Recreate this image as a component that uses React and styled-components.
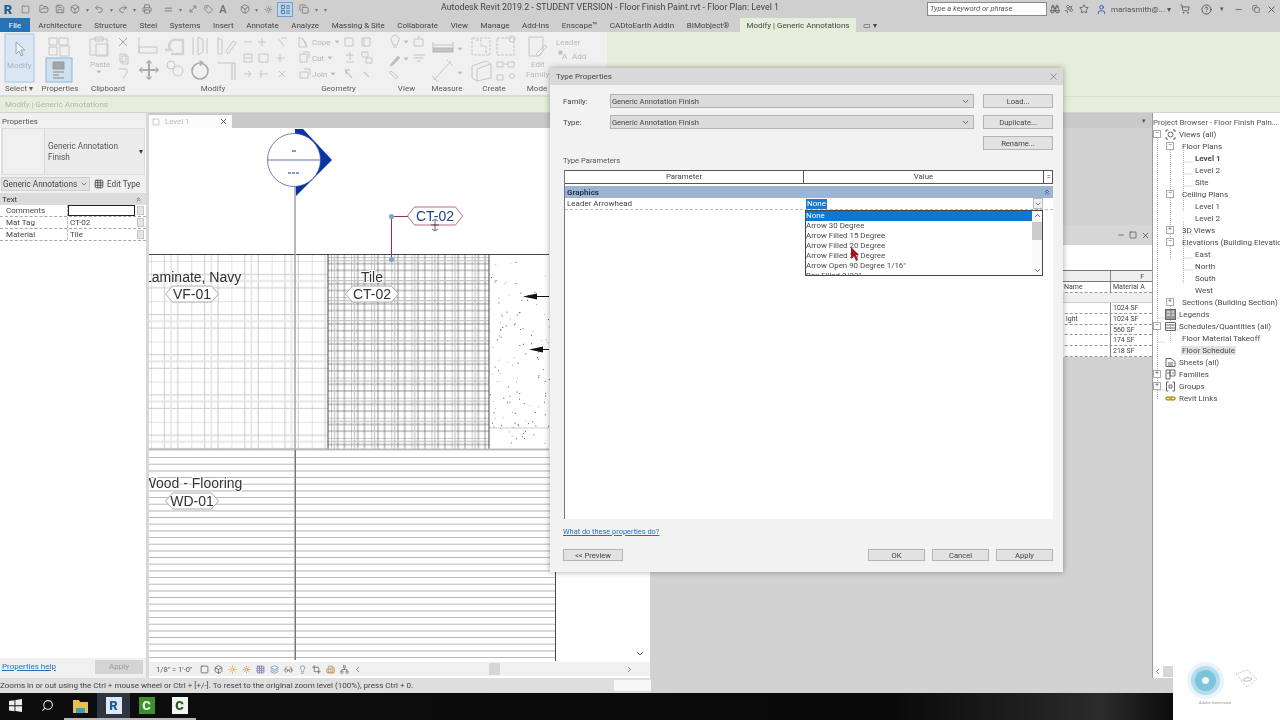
import React from "react";
import styled, { createGlobalStyle } from "styled-components";
import {
  Binoculars, Box, Building2, ChevronDown, ChevronLeft, ChevronRight, ChevronUp, ChevronsUp, CircleHelp, Copy, Crop,
  Equal, FolderOpen, Glasses, Grid3x3, Layers, LayoutList, Lightbulb, Minus, MoveDiagonal, Network, Printer, Redo2,
  Satellite, Save, Search, ShoppingCart, Square, Star, Sun, SunMedium, Tag, Undo2, User, X,
} from "lucide-react";

const UI = `"Roboto", "Noto Sans", sans-serif`;

const Global = createGlobalStyle`
  html, body { margin: 0; padding: 0; background: #fff; }
  * { box-sizing: border-box; }
`;

const Root = styled.div`
  width: 1280px;
  height: 720px;
  position: relative;
  overflow: hidden;
  display: flex;
  flex-direction: column;
  font-family: ${UI};
  font-size: 8px;
  color: #3c3c3c;
  background: #fff;
  filter: blur(0.3px);
`;

/* title bar */
const TitleBar = styled.div`
  height: 18px;
  background: #cfcfcf;
  position: relative;
  display: flex;
  align-items: center;
`;
const Qat = styled.div`
  display: flex;
  align-items: center;
  color: #777;
`;
const QatSlot = styled.span`
  width: ${(p) => p.$w}px;
  height: 15px;
  display: flex;
  align-items: center;
  justify-content: center;
  font-size: ${(p) => (p.$big ? 11 : 6)}px;
  font-weight: ${(p) => (p.$big ? 700 : 400)};
  background: ${(p) => (p.$on ? "#bcd7ee" : "transparent")};
  border: ${(p) => (p.$on ? "1px solid #6aa3d5" : "none")};
`;
const RevitMark = styled.span`
  width: 16px;
  text-align: center;
  font-size: 13px;
  font-weight: 900;
  color: #1f5f98;
`;
const TitleText = styled.div`
  position: absolute;
  left: 441px;
  top: 2px;
  font-size: 8.85px;
  color: #444;
  white-space: nowrap;
`;
const TitleRight = styled.div`
  margin-left: auto;
  display: flex;
  align-items: center;
  color: #555;
`;
const SearchBox = styled.div`
  width: 120px;
  height: 14px;
  background: #fff;
  border: 1px solid #888;
  font-size: 7.5px;
  font-style: italic;
  color: #555;
  padding: 1px 2px;
  margin-right: 1px;
`;
const UserName = styled.span`
  width: 66px;
  font-size: 8px;
  padding-left: 1px;
  white-space: nowrap;
`;
const UserGlyph = styled.span`
  width: ${(p) => p.$w || 14}px;
  display: flex;
  justify-content: center;
  color: ${(p) => p.$c || "#555"};
  font-size: 7px;
`;

/* tabs */
const TabRow = styled.div`
  height: 14px;
  background: #cfcfcf;
  display: flex;
  align-items: stretch;
`;
const FileTab = styled.div`
  width: 30px;
  background: #2574b5;
  color: #fff;
  font-size: 8px;
  display: flex;
  align-items: center;
  justify-content: center;
  margin-right: 2px;
`;
const Tab = styled.div`
  padding: 0 ${(p) => (p.$active ? 7 : 6.3)}px;
  margin-left: ${(p) => (p.$active ? 4 : 0)}px;
  display: flex;
  align-items: center;
  white-space: nowrap;
  font-size: 8px;
  color: #444;
  background: ${(p) => (p.$active ? "#e5eeda" : "transparent")};
`;

/* ribbon */
const Ribbon = styled.div`
  height: 64px;
  display: flex;
  background: #e5eeda;
`;
const RibbonGroup = styled.div`
  width: ${(p) => p.$w}px;
  display: flex;
  flex-direction: column;
  background: #f0f0f0;
  border-bottom: 1px solid #dadada;
`;
const GroupLabel = styled.div`
  height: 11px;
  line-height: 10px;
  text-align: center;
  font-size: 8px;
  color: #5c5c5c;
  white-space: nowrap;
`;
const RibbonArt = styled.svg`
  display: block;
  fill: none;
  stroke: #c6c6c6;
  stroke-width: 1;
  text {
    stroke: none;
    fill: #b8b8b8;
    font-family: ${UI};
    font-size: 8px;
  }
`;
const ContextBar = styled.div`
  height: 17px;
  background: #e5eeda;
  border-top: 1px solid #d6dfcb;
  border-bottom: 1px solid #d4d4d4;
  font-size: 8px;
  color: #b4b4b4;
  padding: 3px 0 0 5px;
`;

/* main area */
const Main = styled.div`
  flex: 1;
  display: flex;
  min-height: 0;
`;
const PropsPanel = styled.div`
  width: 146px;
  display: flex;
  flex-direction: column;
  background: #fff;
`;
const Splitter = styled.div`
  width: 3px;
  background: #d8d8d8;
`;
const PanelHead = styled.div`
  height: 15px;
  background: #f0f0f0;
  font-size: 7.8px;
  color: #555;
  padding: 4px 0 0 2px;
`;
const TypeBox = styled.div`
  height: 47px;
  background: #ececec;
  border: 1px solid #dcdcdc;
  margin: 0 1px;
  display: flex;
  align-items: center;
  position: relative;
`;
const Thumb = styled.div`
  width: 43px;
  height: 45px;
  background: #f0f0f0;
  border-right: 1px solid #d8d8d8;
  border-left: 1px solid #e0e0e0;
`;
const TypeName = styled.div`
  width: 91px;
  margin-left: 3px;
  font-size: 8.2px;
  line-height: 11px;
  color: #555;
`;
const SelectorRow = styled.div`
  height: 18px;
  background: #f0f0f0;
  display: flex;
  align-items: center;
  padding: 1px 1px;
`;
const CatSelect = styled.div`
  width: 89px;
  height: 14px;
  background: #e2e2e2;
  border: 1px solid #cfcfcf;
  font-size: 8.2px;
  color: #444;
  display: flex;
  align-items: center;
  justify-content: space-between;
  padding: 0 1px;
  white-space: nowrap;
`;
const EditType = styled.div`
  flex: 1;
  display: flex;
  align-items: center;
  gap: 3px;
  padding-left: 4px;
  font-size: 8.2px;
  color: #444;
`;
const GroupHead = styled.div`
  height: 12px;
  background: #dcdcdc;
  display: flex;
  align-items: center;
  justify-content: space-between;
  padding: 0 4px 0 2px;
  font-size: 8px;
  color: #333;
`;
const PropRow = styled.div`
  height: 12px;
  display: grid;
  grid-template-columns: 68px 67px 11px;
  border-bottom: 1px dashed #a8a8a8;
  font-size: 8px;
  color: #444;
`;
const PropName = styled.div`
  padding-left: 6px;
  border-right: 1px dashed #bbb;
  line-height: 11px;
`;
const PropValue = styled.div`
  padding-left: 2px;
  line-height: 11px;
  border: ${(p) => (p.$focus ? "1px solid #222" : "none")};
`;
const PropGrip = styled.div`
  margin: 1px 2px;
  background: #e4e4e4;
  border: 1px solid #c8c8c8;
`;
const PanelFiller = styled.div`
  flex: 1;
`;
const PanelFoot = styled.div`
  height: 20px;
  background: #f0f0f0;
  display: flex;
  align-items: center;
  justify-content: space-between;
  padding: 0 3px 3px 2px;
`;
const HelpLink = styled.span`
  color: #2a6fb5;
  text-decoration: underline;
  font-size: 8px;
`;
const ApplyGhost = styled.div`
  width: 48px;
  height: 14px;
  background: #d4d4d4;
  color: #9a9a9a;
  font-size: 8px;
  text-align: center;
  line-height: 14px;
`;

/* view */
const ViewPane = styled.div`
  width: 501px;
  display: flex;
  flex-direction: column;
  background: #fff;
`;
const ViewTabs = styled.div`
  height: 15px;
  padding-top: 2px;
  background: #c9c9c9;
  display: flex;
`;
const ViewTab = styled.div`
  width: 83px;
  background: #fbfbfb;
  display: flex;
  align-items: center;
  padding: 0 4px 0 3px;
  font-size: 7.8px;
  color: #bbb;
  gap: 5px;
`;
const TabClose = styled.span`
  margin-left: auto;
  color: #333;
  display: flex;
`;
const PlanSvg = styled.svg`
  display: block;
  text {
    font-family: "Liberation Sans", Arial, sans-serif;
  }
`;
const ViewBar = styled.div`
  height: 14px;
  background: #f0f0f0;
  display: flex;
  align-items: center;
  color: #666;
  padding-left: 7px;
  position: relative;
`;
const Scale = styled.span`
  width: 44px;
  font-size: 7.6px;
  color: #555;
  white-space: nowrap;
`;
const BarIcons = styled.div`
  display: flex;
  gap: 5px;
  align-items: center;
  margin-right: 4px;
`;
const ScrollThumb = styled.div`
  width: 11px;
  height: 12px;
  margin-left: 127px;
  background: #d6d6d6;
`;
const ScrollEnd = styled.span`
  margin-left: auto;
  margin-right: 16px;
  display: flex;
`;

/* grey workspace with the schedule window */
const Workspace = styled.div`
  flex: 1;
  min-width: 0;
  position: relative;
  background: #d2d2d2;
  border-right: 1px solid #9c9c9c;
`;
const WorkStrip = styled.div`
  height: 15px;
  background: #c9c9c9;
  display: flex;
  justify-content: flex-end;
  align-items: center;
  padding-right: 6px;
  color: #555;
  font-size: 7px;
`;
const ScheduleWin = styled.div`
  position: absolute;
  left: 390px;
  top: 112px;
  width: 112px;
  display: flex;
  flex-direction: column;
`;
const SchedTitle = styled.div`
  height: 20px;
  background: #d6d6d6;
  display: flex;
  justify-content: flex-end;
  align-items: center;
  gap: 4px;
  padding-right: 2px;
  color: #444;
`;
const SchedBody = styled.div`
  background: #fff;
  padding-top: 25px;
`;
const SchedRow = styled.div`
  height: ${(p) => p.$h || 10.8}px;
  display: grid;
  grid-template-columns: 70px 42px;
  font-size: 7px;
  line-height: ${(p) => p.$h || 10.8}px;
  color: #444;
  background: ${(p) => p.$bg || "#fff"};
  border-bottom: 1px ${(p) => p.$line || "dashed #999"};
  border-top: ${(p) => (p.$top ? "1px solid #777" : "none")};
`;
const SchedCell = styled.div`
  padding-left: ${(p) => p.$indent || 2}px;
  text-align: ${(p) => p.$align || "left"};
  padding-right: ${(p) => (p.$align === "right" ? 8 : 0)}px;
  border-left: ${(p) => (p.$rule ? "1px solid #888" : "none")};
  overflow: hidden;
  white-space: nowrap;
`;

/* project browser */
const BrowserPane = styled.div`
  flex: 0 0 127px;
  min-width: 0;
  overflow: hidden;
  background: #fff;
  position: relative;
  display: flex;
  flex-direction: column;
`;
const BrowserHead = styled.div`
  font-size: 7.8px;
  color: #555;
  height: 15px;
  padding: 5px 0 0 0;
  white-space: nowrap;
  overflow: hidden;
`;
const TreeLines = styled.svg`
  position: absolute;
  left: 0;
  top: 0;
  fill: none;
  stroke: #b5b5b5;
  stroke-dasharray: 1 1;
`;
const TreeRow = styled.div`
  height: 12px;
  flex: none;
  position: relative;
  display: flex;
  align-items: center;
  padding-left: ${(p) => p.$pad}px;
  font-size: 8px;
  white-space: nowrap;
  color: #4a4a4a;
  font-weight: ${(p) => (p.$bold ? 700 : 400)};
`;
const TreeBox = styled.span`
  width: 8px;
  height: 8px;
  margin-right: ${(p) => p.$gap}px;
  background: #fff;
  border: 1px solid #aaa;
  color: #555;
  font-size: 7px;
  line-height: 5px;
  text-align: center;
  flex: none;
`;
const TreeIcon = styled.svg`
  width: 11px;
  height: 11px;
  margin-right: 3px;
  fill: none;
  stroke: #666;
  flex: none;
`;
const TreeText = styled.span`
  background: ${(p) => (p.$on ? "#e2e2e2" : "transparent")};
  padding: 0 ${(p) => (p.$on ? "1px" : "0")};
`;
const BrowserBottom = styled.div`
  margin-top: auto;
  height: 14px;
  display: flex;
  align-items: center;
  color: #555;
`;
const BrowserThumb = styled.span`
  width: 10px;
  height: 11px;
  background: #d6d6d6;
  margin-left: 1px;
`;

/* status + taskbar */
const StatusBar = styled.div`
  height: 15px;
  background: #dedede;
  display: flex;
  align-items: center;
  font-size: 8.05px;
  color: #444;
  position: relative;
`;
const StatusText = styled.span`
  width: 614px;
  white-space: nowrap;
`;
const StatusField = styled.div`
  width: 37px;
  height: 11px;
  background: #f7f7f7;
`;
const StatusGrey = styled.div`
  flex: 1;
  height: 100%;
  background: #d2d2d2;
`;
const Taskbar = styled.div`
  height: 27px;
  background: linear-gradient(90deg, #0d0d0d 0%, #0a0a0a 70%, #2b2b2b 86%, #0a0a0a 92%);
  display: flex;
  align-items: center;
`;
const TaskItem = styled.div`
  width: ${(p) => p.$w || 33}px;
  height: 27px;
  display: flex;
  align-items: center;
  justify-content: center;
  color: #ddd;
  background: ${(p) => (p.$active ? "#2c3542" : "transparent")};
  border-bottom: 2px solid ${(p) => (p.$open ? "#b8b8b8" : "transparent")};
`;
const AppTile = styled.div`
  width: 16px;
  height: 17px;
  background: ${(p) => p.$bg};
  color: ${(p) => p.$fg};
  font-size: 13px;
  font-weight: 900;
  line-height: 17px;
  text-align: center;
`;

/* floating things */
const Watermark = styled.div`
  position: absolute;
  left: 1173px;
  top: 663px;
  width: 107px;
  height: 57px;
  background: #fff;
`;
const WaterRing = styled.div`
  position: absolute;
  left: 14px;
  top: -1px;
  width: 37px;
  height: 37px;
  border-radius: 50%;
  background: radial-gradient(circle, #f4f4f4 0 3px, #7cc3dc 4px 10px, #b4dcea 11px 14px, #e8f3fa 15px);
`;
const WaterLogo = styled.svg`
  position: absolute;
  left: 62px;
  top: 6px;
  fill: none;
  stroke: #8a8a8a;
  stroke-width: 0.6;
`;
const WaterCaption = styled.div`
  position: absolute;
  left: 26px;
  top: 37px;
  font-size: 4px;
  color: #999;
  white-space: nowrap;
`;

/* type properties dialog */
const Dialog = styled.div`
  position: absolute;
  left: 550px;
  top: 68px;
  width: 513px;
  height: 504px;
  background: #f2f2f2;
  box-shadow: 0 0 6px rgba(0, 0, 0, 0.35);
  display: flex;
  flex-direction: column;
`;
const DialogHead = styled.div`
  height: 17px;
  background: #d9d9d9;
  display: flex;
  align-items: center;
  justify-content: space-between;
  padding: 0 4px 0 6px;
  font-size: 8px;
  color: #444;
`;
const DialogBody = styled.div`
  flex: 1;
  padding: 9px 10px 11px 13px;
  display: flex;
  flex-direction: column;
`;
const FormRow = styled.div`
  height: 14px;
  display: flex;
  align-items: center;
  margin-bottom: 7px;
  justify-content: ${(p) => (p.$end ? "flex-end" : "flex-start")};
`;
const FormLabel = styled.span`
  width: 47px;
  font-size: 7.8px;
  color: #444;
`;
const Combo = styled.div`
  width: 365px;
  height: 14px;
  margin-right: 9px;
  background: #dbdbdb;
  border: 1px solid #b2b2b2;
  display: flex;
  align-items: center;
  justify-content: space-between;
  padding: 0 3px 0 1px;
  font-size: 7.6px;
  color: #444;
`;
const DlgButton = styled.div`
  width: ${(p) => p.$w || 70}px;
  height: ${(p) => p.$h || 14}px;
  background: #e2e2e2;
  border: 1px solid #b4b4b4;
  font-size: 7.6px;
  color: #444;
  display: flex;
  align-items: center;
  justify-content: center;
`;
const SectionTitle = styled.div`
  height: 12px;
  margin-top: -4px;
  margin-bottom: 5px;
  padding-top: 3px;
  font-size: 7.6px;
  color: #555;
`;
const ParamTable = styled.div`
  height: 349px;
  width: 489px;
  margin-left: 1px;
  background: #fff;
  border-left: 1px solid #777;
  position: relative;
  display: flex;
  flex-direction: column;
`;
const ParamHead = styled.div`
  height: 14px;
  display: grid;
  grid-template-columns: 239px 240px 10px;
  border: 1px solid #555;
  border-left: none;
  background: #fff;
  font-size: 7.8px;
  color: #444;
  text-align: center;
  line-height: 12px;
`;
const HeadCell = styled.div`
  border-right: ${(p) => (p.$last ? "none" : "1px solid #555")};
`;
const ParamGroup = styled.div`
  height: 12px;
  margin-top: 2px;
  background: #9db4d3;
  display: flex;
  align-items: center;
  justify-content: space-between;
  padding: 0 2px;
  font-size: 8px;
  font-weight: 700;
  color: #23364f;
`;
const ParamRow = styled.div`
  height: 12px;
  display: grid;
  grid-template-columns: 240px 238px 11px;
  font-size: 8px;
  line-height: 11px;
  color: #444;
  border-bottom: 1px dashed #bbb;
`;
const ParamName = styled.div`
  padding-left: 2px;
`;
const ParamValue = styled.div`
  padding-left: 1px;
  display: flex;
  justify-content: space-between;
  align-items: center;
`;
const Selected = styled.span`
  background: #1a78d0;
  color: #fff;
  padding: 0 1px;
  line-height: 10px;
`;
const DropArrow = styled.span`
  width: 10px;
  height: 11px;
  background: #eee;
  border: 1px solid #bbb;
  display: flex;
  align-items: center;
  justify-content: center;
  color: #555;
`;
const DropList = styled.div`
  position: absolute;
  left: 240px;
  top: 40px;
  width: 238px;
  height: 66px;
  background: #fff;
  border: 1px solid #444;
  display: flex;
  overflow: hidden;
`;
const DropItems = styled.div`
  flex: 1;
  min-width: 0;
`;
const DropItem = styled.div`
  height: 10px;
  line-height: 10px;
  font-size: 7.9px;
  white-space: nowrap;
  color: ${(p) => (p.$on ? "#fff" : "#4a4a4a")};
  background: ${(p) => (p.$on ? "#0c78d4" : "transparent")};
`;
const DropScroll = styled.div`
  width: 10px;
  display: flex;
  flex-direction: column;
  align-items: center;
  justify-content: space-between;
  color: #444;
  position: relative;
  background: #fafafa;
`;
const DropThumb = styled.div`
  position: absolute;
  top: 11px;
  left: 0;
  width: 10px;
  height: 18px;
  background: #cdcdcd;
`;
const LinkRow = styled.div`
  margin-top: 8px;
  height: 10px;
  font-size: 7.4px;
  color: #2a6fb5;
  text-decoration: underline;
`;
const DialogFoot = styled.div`
  margin-top: auto;
  display: flex;
  align-items: center;
  gap: 7px;
`;
const FootGap = styled.div`
  flex: 1;
`;
const RedCursor = styled.svg`
  position: absolute;
  left: 851px;
  top: 247px;
`;

const QAT_ITEMS = [
  { w: 19, icon: <Square size={9} /> },
  { w: 17, icon: <FolderOpen size={10} /> },
  { w: 16, icon: <Save size={10} /> },
  { w: 14, icon: <Box size={10} /> },
  { w: 11, icon: "▾" },
  { w: 12, icon: <Undo2 size={10} /> },
  { w: 12, icon: "▾" },
  { w: 11, icon: <Redo2 size={10} /> },
  { w: 12, icon: "▾" },
  { w: 14, icon: <Printer size={10} /> },
  { w: 6 },
  { w: 16, icon: <Equal size={11} /> },
  { w: 8, icon: "▾" },
  { w: 18, icon: <MoveDiagonal size={10} /> },
  { w: 12, icon: <Tag size={9} /> },
  { w: 18, icon: "A", big: true },
  { w: 5 },
  { w: 16, icon: <Box size={10} /> },
  { w: 6, icon: "▾" },
  { w: 18, icon: <SunMedium size={9} /> },
  { w: 16, icon: <LayoutList size={11} color="#3d6f9e" />, on: true },
  { w: 22, icon: <Copy size={10} /> },
  { w: 2, icon: "▾" },
  { w: 16, icon: "▾" },
];

const TABS = [
  "Architecture", "Structure", "Steel", "Systems", "Insert", "Annotate", "Analyze", "Massing & Site",
  "Collaborate", "View", "Manage", "Add-Ins", "Enscape™", "CADtoEarth AddIn", "BIMobject®",
];

const Art = ({ x, w, children }) => (
  <RibbonArt width={w} height={52} viewBox={`${x} 32 ${w} 52`}>
    {children}
  </RibbonArt>
);

const Ribbons = () => (
  <Ribbon>
    <RibbonGroup $w={38}>
      <Art x={0} w={38}>
        <rect x="5" y="34" width="29" height="48" fill="#d9e6f3" stroke="#a9c5e2" />
        <path d="M16 42v12l3-3 2 5 2-1-2-5h4z" fill="#eef3f8" stroke="#9aa8b5" />
        <text x="7" y="68" style={{ fill: "#a6b4c2" }}>Modify</text>
      </Art>
      <GroupLabel>Select ▾</GroupLabel>
    </RibbonGroup>
    <RibbonGroup $w={44}>
      <Art x={38} w={44}>
        <path d="M49 38h8v7h-8zM59 38h9v7h-9zM49 47h8v8h-8zM60 46h9v10h-9z" />
        <rect x="46" y="58" width="26" height="24" fill="#cfe0f0" stroke="#8db5da" />
        <path d="M53 62h11v7h-11z" fill="#a4a4a4" stroke="#999" />
        <path d="M53 72h11M53 75h6m-6 3h11" stroke="#8a8a8a" />
      </Art>
      <GroupLabel>Properties</GroupLabel>
    </RibbonGroup>
    <RibbonGroup $w={52}>
      <Art x={82} w={52}>
        <path d="M90 39h17v16h-17z" />
        <path d="M95 37h8v4h-8zM96 44h12v12h-12z" />
        <text x="90" y="67">Paste</text>
        <path d="M97 71h4l-2 2z" fill="#aaa" />
        <path d="M119 38l8 8m0-8l-8 8" stroke="#a5a5a5" />
        <path d="M120 54h6v8h-6zM122 56h6v8h-6z" />
        <path d="M119 69h8v4l-4 5" />
      </Art>
      <GroupLabel>Clipboard</GroupLabel>
    </RibbonGroup>
    <RibbonGroup $w={158}>
      <Art x={134} w={158}>
        <path d="M139 37v16m0-6h18v6h-18z" />
        <path d="M149 62v16m-8-8h16" strokeWidth="2" stroke="#a8a8a8" />
        <path d="M149 60l-3 3h6zM149 80l-3-3h6zM139 70l3-3v6zM159 70l-3-3v6z" fill="#a8a8a8" />
        <path d="M165 50h6a6 6 0 0 1 6-10h6v14h-12" strokeWidth="2.4" stroke="#d2d2d2" />
        <circle cx="171" cy="65" r="4" />
        <circle cx="178" cy="71" r="5" />
        <path d="M193 37v18m5 0v-18l5 3v12zM207 38v16" />
        <circle cx="200" cy="71" r="8" strokeWidth="1.6" stroke="#a9a9a9" />
        <path d="M200 60l4 3-4 3z" fill="#a9a9a9" />
        <path d="M218 38v16h4v-14zM228 54l8-11-3-2-7 10z" />
        <path d="M218 63h17M232 63v17m3-17v17" strokeWidth="1.2" />
        <path d="M244 42h8M258 42h8M262 38v8M278 38l6 8m-3-8h6" />
        <path d="M244 54h8v8h-8zM244 58h8M259 54h9v8h-9zM280 54v8m-3-4h8" />
        <path d="M244 74h6m-2-3l3 3-3 3M261 70v8m-2-4h9M279 71l6 6m0-6l-6 6" />
      </Art>
      <GroupLabel>Modify</GroupLabel>
    </RibbonGroup>
    <RibbonGroup $w={93}>
      <Art x={292} w={93}>
        <path d="M299 37v10h8l-2-6zM302 38l5 9" />
        <text x="312" y="45">Cope</text>
        <path d="M335 41h4l-2 2z" fill="#aaa" />
        <path d="M300 54h7v8h-7zM303 52h6v6" />
        <text x="312" y="61">Cut</text>
        <path d="M328 57h4l-2 2z" fill="#aaa" />
        <path d="M300 72h8v6h-8zM304 69h6v6" />
        <text x="312" y="77">Join</text>
        <path d="M331 73h4l-2 2z" fill="#aaa" />
        <path d="M345 38h8v8h-8zM362 38h8v8h-8zM364 38v8" />
        <path d="M346 55h8M350 52v8M346 62h8M362 52h6v5h-6zM366 58h6v5h-6z" />
        <path d="M345 70l7 8M350 70h-4v4M364 72l5 5" strokeWidth="1.4" />
      </Art>
      <GroupLabel>Geometry</GroupLabel>
    </RibbonGroup>
    <RibbonGroup $w={43}>
      <Art x={385} w={43}>
        <path d="M392 42a4 4 0 1 1 6 0l-1 3h-4zM393 47h4" />
        <path d="M404 41h4l-2 2zM404 58h4l-2 2z" fill="#aaa" />
        <path d="M414 39h9v7h-9zM417 37h3" />
        <path d="M391 64l7-8 2 2-7 7-3 1z" fill="#c0c0c0" />
        <path d="M413 55h12M413 58h10m-6 3h4" />
        <path d="M391 71l7 6-2 2-6-6z" />
      </Art>
      <GroupLabel>View</GroupLabel>
    </RibbonGroup>
    <RibbonGroup $w={38}>
      <Art x={428} w={38}>
        <path d="M433 45h20m-20-3v6m20-6v6" />
        <rect x="433" y="48" width="20" height="4" fill="#c4c4c4" stroke="#b5b5b5" />
        <path d="M458 48h4l-2 2z" fill="#aaa" />
        <path d="M434 80l17-19m-19 15l6 6m9-22l6 6" />
        <path d="M458 72h4l-2 2z" fill="#aaa" />
      </Art>
      <GroupLabel>Measure</GroupLabel>
    </RibbonGroup>
    <RibbonGroup $w={56}>
      <Art x={466} w={56}>
        <path d="M472 38h18v17h-18zM476 40h5v6h5v7" strokeDasharray="3 1" />
        <path d="M497 38h17v17h-17z" strokeDasharray="3 1" />
        <circle cx="512" cy="39" r="3" />
        <path d="M472 66l14-5 5 3v14l-14 3-5-3zM477 69l14-5M477 69v12" />
        <path d="M497 62h6v5h-6zM508 62h6v5h-6zM503 64h5M497 75h6v5h-6zM512 73l3 3-3 3-3-3z" />
      </Art>
      <GroupLabel>Create</GroupLabel>
    </RibbonGroup>
    <RibbonGroup $w={30}>
      <Art x={522} w={30}>
        <path d="M529 37h14v14l-4 5h-10zM536 54l9-9 2 2-9 9z" />
        <text x="531" y="67">Edit</text>
        <text x="526" y="77">Family</text>
      </Art>
      <GroupLabel>Mode</GroupLabel>
    </RibbonGroup>
    <RibbonGroup $w={55}>
      <Art x={552} w={55}>
        <text x="556" y="45">Leader</text>
        <path d="M559 51h3v3h-3z" fill="#bbb" />
        <text x="562" y="59">A</text>
        <text x="572" y="59">Add</text>
      </Art>
      <GroupLabel />
    </RibbonGroup>
  </Ribbon>
);

const rand = (n) => {
  const v = Math.sin(n * 12.9898) * 43758.5453;
  return v - Math.floor(v);
};
const STIPPLE = Array.from({ length: 120 }, (_, i) => [490 + rand(i + 1) * 59, 257 + rand(i + 301) * 190]);

const HexTag = ({ cx, cy, w, text, color = "#8a8a8a", fill = "#333", h = 8 }) => {
  const l = cx - w / 2;
  const r = cx + w / 2;
  return (
    <g>
      <polygon
        points={`${l},${cy} ${l + 7},${cy - h} ${r - 7},${cy - h} ${r},${cy} ${r - 7},${cy + h} ${l + 7},${cy + h}`}
        fill="#fff"
        stroke={color}
        strokeWidth="0.7"
      />
      <text x={cx} y={cy + 5} fontSize="14" textAnchor="middle" fill={fill}>{text}</text>
    </g>
  );
};

const FloorPlan = () => (
  <PlanSvg width="501" height="534" viewBox="149 128 501 534">
    <defs>
      <pattern id="lam" x="151" y="261" width="40.2" height="40.2" patternUnits="userSpaceOnUse">
        <path d="M0 0v40.2M13.4 0v40.2M26.8 0v40.2M0 0h40.2M0 13.4h40.2M0 26.8h40.2" stroke="#bdbdbd" strokeWidth="0.8" fill="none" />
        <path d="M20 0v40.2M0 20h40.2" stroke="#e4e4e4" strokeWidth="1.6" fill="none" />
      </pattern>
      <pattern id="tile" x="331" y="257" width="20.1" height="20.1" patternUnits="userSpaceOnUse">
        <path d="M0 0v20.1M6.7 0v20.1M13.4 0v20.1M0 0h20.1M0 6.7h20.1M0 13.4h20.1" stroke="#5f5f5f" strokeWidth="0.65" fill="none" />
        <path d="M3.4 0v20.1M0 3.4h20.1" stroke="#c4c4c4" strokeWidth="1.2" fill="none" />
      </pattern>
      <pattern id="wood" x="149" y="457" width="10" height="20" patternUnits="userSpaceOnUse">
        <path d="M0 0.5h10M0 7.2h10" stroke="#9c9c9c" strokeWidth="0.7" fill="none" />
        <path d="M0 13.9h10" stroke="#cfcfcf" strokeWidth="1.6" fill="none" />
      </pattern>
    </defs>
    <rect x="149" y="254" width="179" height="195" fill="url(#lam)" />
    <rect x="328" y="254" width="161" height="195" fill="url(#tile)" />
    {STIPPLE.map(([x, y], i) => (
      <rect key={i} x={x} y={y} width="1" height="1" fill={i % 3 ? "#555" : "#aaa"} />
    ))}
    <path d="M489 428h60" stroke="#cfcfcf" />
    <path d="M149 254.5h400M328 254v195M489 254v195" stroke="#333" strokeWidth="0.9" fill="none" />
    <path d="M149 449.5h400" stroke="#bbb" strokeWidth="2" />
    <rect x="149" y="454" width="406" height="206" fill="url(#wood)" />
    <path d="M555.5 450v211" stroke="#333" strokeWidth="0.9" />
    <path d="M295 187v473" stroke="#a8a8a8" strokeWidth="1.6" />
    <path d="M295.5 450v210" stroke="#777" strokeWidth="1" />

    <polygon points="295,129 303,129 332,160 296,196" fill="#0b33a8" />
    <circle cx="294" cy="160" r="26.5" fill="#fff" stroke="#3a4b85" strokeWidth="0.7" />
    <path d="M268 160h53" stroke="#3a4b85" strokeWidth="0.8" />
    <path d="M292 151h4M288 173h3m1 0h3m1 0h3" stroke="#1a2f86" strokeWidth="1.2" />

    <path d="M408 216.5h-16.5v43" stroke="#98304c" strokeWidth="1" fill="none" />
    <circle cx="391.5" cy="216.5" r="2.6" fill="#86a2c7" />
    <circle cx="391.5" cy="259.5" r="2.6" fill="#86a2c7" />
    <HexTag cx={435} cy={216} w={55} h={9} text="CT-02" color="#98304c" fill="#24408f" />
    <path d="M435 220v10M431 225h8M432 221l3-2 3 2M432 229l3 2 3-2" stroke="#223" strokeWidth="0.7" fill="none" />

    <text x="144" y="282" fontSize="14" fill="#333">Laminate, Navy</text>
    <HexTag cx={192} cy={294} w={53} text="VF-01" />
    <text x="372" y="282" fontSize="14" fill="#333" textAnchor="middle" stroke="#fff" strokeWidth="2" paintOrder="stroke">Tile</text>
    <HexTag cx={372} cy={294} w={53} text="CT-02" />
    <path d="M549 296.5h-16" stroke="#111" />
    <polygon points="523,296.5 537,293.5 537,299.5" fill="#111" />
    <path d="M549 349.5h-16" stroke="#111" />
    <polygon points="529,349.5 543,346.5 543,352.5" fill="#111" />

    <text x="143" y="488" fontSize="14" fill="#333" stroke="#fff" strokeWidth="2" paintOrder="stroke">Wood - Flooring</text>
    <HexTag cx={192} cy={501} w={53} text="WD-01" />
    <path d="M640 655l-3-3m3 3l3-3" stroke="#555" fill="none" />
  </PlanSvg>
);

const ICONS = {
  views: <g><path d="M1 3V1h2M8 1h2v2M1 8v2h2M10 8v2H8" /><circle cx="5.5" cy="5.5" r="2.5" /></g>,
  legend: <g fill="#999"><rect x="0.5" y="0.5" width="10" height="10" /><path d="M2 3h3M2 6h3M7 3h2M7 6h2" stroke="#fff" /></g>,
  sched: <path d="M0.5 1.5h10v8h-10zM0.5 4h10M0.5 7h10" />,
  sheet: <path d="M1 1.5h5l4 3v5H1zM3 6h5M3 8h5" />,
  family: <path d="M1 1h4v9H1zM5 1h5v6H5zM2 4h2M7 4h2" />,
  group: <path d="M1.5 1v9M9.5 1v9M1.5 1h2M1.5 10h2M9.5 1h-2M9.5 10h-2M4 4h3v3H4z" />,
  links: <g stroke="#b8a01e" strokeWidth="1.6"><ellipse cx="3.5" cy="5.5" rx="2.5" ry="1.4" /><ellipse cx="7.5" cy="5.5" rx="2.5" ry="1.4" /></g>,
};

const TREE = [
  { t: "Views (all)", pad: 0, box: "−", icon: "views" },
  { t: "Floor Plans", pad: 13, box: "−" },
  { t: "Level 1", pad: 42, bold: true },
  { t: "Level 2", pad: 42 },
  { t: "Site", pad: 42 },
  { t: "Ceiling Plans", pad: 13, box: "−" },
  { t: "Level 1", pad: 42 },
  { t: "Level 2", pad: 42 },
  { t: "3D Views", pad: 13, box: "+" },
  { t: "Elevations (Building Elevation)", pad: 13, box: "−" },
  { t: "East", pad: 42 },
  { t: "North", pad: 42 },
  { t: "South", pad: 42 },
  { t: "West", pad: 42 },
  { t: "Sections (Building Section)", pad: 13, box: "+" },
  { t: "Legends", pad: 12, icon: "legend" },
  { t: "Schedules/Quantities (all)", pad: 0, box: "−", icon: "sched" },
  { t: "Floor Material Takeoff", pad: 29 },
  { t: "Floor Schedule", pad: 28, on: true },
  { t: "Sheets (all)", pad: 12, icon: "sheet" },
  { t: "Families", pad: 0, box: "+", icon: "family" },
  { t: "Groups", pad: 0, box: "+", icon: "group" },
  { t: "Revit Links", pad: 12, icon: "links" },
];

const Browser = () => (
  <BrowserPane>
    <TreeLines width="127" height="300">
      <path d="M4.5 25v262M17.5 37v110M30.5 37v62M30.5 49h10M30.5 61h10M30.5 73h10M30.5 109v62M30.5 121h10M30.5 133h10M30.5 145h10M30.5 157h10M17.5 193v36M17.5 205h10M17.5 217h10M4.5 205h8M4.5 229h8M4.5 277h8" />
    </TreeLines>
    <BrowserHead>Project Browser - Floor Finish Pain...</BrowserHead>
    {TREE.map((row, i) => (
      <TreeRow key={i} $pad={row.pad} $bold={row.bold}>
        {row.box && <TreeBox $gap={row.icon ? 4 : 8}>{row.box}</TreeBox>}
        {row.icon && <TreeIcon viewBox="0 0 11 11">{ICONS[row.icon]}</TreeIcon>}
        <TreeText $on={row.on}>{row.t}</TreeText>
      </TreeRow>
    ))}
    <BrowserBottom>
      <ChevronLeft size={9} />
      <BrowserThumb />
    </BrowserBottom>
  </BrowserPane>
);

const ARROWHEADS = [
  "Arrow 30 Degree", "Arrow Filled 15 Degree", "Arrow Filled 20 Degree", "Arrow Filled 30 Degree",
  "Arrow Open 90 Degree 1/16\"", "Box Filled 3/32\"",
];

const TypeDialog = () => (
  <Dialog>
    <DialogHead>
      Type Properties
      <X size={11} strokeWidth={1} />
    </DialogHead>
    <DialogBody>
      <FormRow>
        <FormLabel>Family:</FormLabel>
        <Combo>Generic Annotation Finish<ChevronDown size={9} /></Combo>
        <DlgButton>Load...</DlgButton>
      </FormRow>
      <FormRow>
        <FormLabel>Type:</FormLabel>
        <Combo>Generic Annotation Finish<ChevronDown size={9} /></Combo>
        <DlgButton>Duplicate...</DlgButton>
      </FormRow>
      <FormRow $end>
        <DlgButton>Rename...</DlgButton>
      </FormRow>
      <SectionTitle>Type Parameters</SectionTitle>
      <ParamTable>
        <ParamHead>
          <HeadCell>Parameter</HeadCell>
          <HeadCell>Value</HeadCell>
          <HeadCell $last>=</HeadCell>
        </ParamHead>
        <ParamGroup>Graphics<ChevronsUp size={8} /></ParamGroup>
        <ParamRow>
          <ParamName>Leader Arrowhead</ParamName>
          <ParamValue><Selected>None</Selected><DropArrow><ChevronDown size={8} /></DropArrow></ParamValue>
        </ParamRow>
        <DropList>
          <DropItems>
            <DropItem $on>None</DropItem>
            {ARROWHEADS.map((name) => <DropItem key={name}>{name}</DropItem>)}
          </DropItems>
          <DropScroll>
            <ChevronUp size={9} />
            <DropThumb />
            <ChevronDown size={9} />
          </DropScroll>
        </DropList>
      </ParamTable>
      <LinkRow>What do these properties do?</LinkRow>
      <DialogFoot>
        <DlgButton $w={60} $h={12}>&lt;&lt; Preview</DlgButton>
        <FootGap />
        <DlgButton $w={57} $h={12}>OK</DlgButton>
        <DlgButton $w={57} $h={12}>Cancel</DlgButton>
        <DlgButton $w={57} $h={12}>Apply</DlgButton>
      </DialogFoot>
    </DialogBody>
  </Dialog>
);

const BAR_ICONS = [
  [Square, "#555"], [Box, "#555"], [Sun, "#e2a01c"], [SunMedium, "#c0862a"], [Grid3x3, "#7c6aa8"],
  [Layers, "#6f8fb5"], [Glasses, "#777"], [Lightbulb, "#5b8fb5"], [Crop, "#555"], [Building2, "#b5853c"], [Network, "#777"],
];

const SCHED_ROWS = [["", "1024 SF"], ["ight", "1024 SF"], ["", "560 SF"], ["", "174 SF"], ["", "218 SF"]];

export default function App() {
  return (
    <>
      <Global />
      <Root>
        <TitleBar>
          <RevitMark>R</RevitMark>
          <Qat>
            {QAT_ITEMS.map((item, i) => (
              <QatSlot key={i} $w={item.w} $big={item.big} $on={item.on}>{item.icon}</QatSlot>
            ))}
          </Qat>
          <TitleText>Autodesk Revit 2019.2 - STUDENT VERSION - Floor Finish Paint.rvt - Floor Plan: Level 1</TitleText>
          <TitleRight>
            <SearchBox>Type a keyword or phrase</SearchBox>
            <UserGlyph><Binoculars size={10} /></UserGlyph>
            <UserGlyph><Satellite size={10} /></UserGlyph>
            <UserGlyph $w={16}><Star size={10} /></UserGlyph>
            <UserGlyph $c="#2a5aa8" $w={18}><User size={11} /></UserGlyph>
            <UserName>marlasmith@...  ▾</UserName>
            <UserGlyph $w={18}><ShoppingCart size={10} /></UserGlyph>
            <UserGlyph $w={24}><CircleHelp size={11} /></UserGlyph>
            <UserGlyph $w={8}>▾</UserGlyph>
            <UserGlyph $w={24}><Minus size={9} /></UserGlyph>
            <UserGlyph $w={12}><Copy size={8} /></UserGlyph>
            <UserGlyph $w={18}><X size={11} /></UserGlyph>
          </TitleRight>
        </TitleBar>
        <TabRow>
          <FileTab>File</FileTab>
          {TABS.map((t) => <Tab key={t}>{t}</Tab>)}
          <Tab $active>Modify | Generic Annotations</Tab>
          <Tab>▭ ▾</Tab>
        </TabRow>
        <Ribbons />
        <ContextBar>Modify | Generic Annotations</ContextBar>
        <Main>
          <PropsPanel>
            <PanelHead>Properties</PanelHead>
            <TypeBox>
              <Thumb />
              <TypeName>Generic Annotation Finish</TypeName>
              ▾
            </TypeBox>
            <SelectorRow>
              <CatSelect>Generic Annotations<ChevronDown size={8} /></CatSelect>
              <EditType><Grid3x3 size={10} />Edit Type</EditType>
            </SelectorRow>
            <GroupHead>Text<ChevronsUp size={7} /></GroupHead>
            <PropRow>
              <PropName>Comments</PropName>
              <PropValue $focus />
              <PropGrip />
            </PropRow>
            <PropRow>
              <PropName>Mat Tag</PropName>
              <PropValue>CT-02</PropValue>
              <PropGrip />
            </PropRow>
            <PropRow>
              <PropName>Material</PropName>
              <PropValue>Tile</PropValue>
              <PropGrip />
            </PropRow>
            <PanelFiller />
            <PanelFoot>
              <HelpLink>Properties help</HelpLink>
              <ApplyGhost>Apply</ApplyGhost>
            </PanelFoot>
          </PropsPanel>
          <Splitter />
          <ViewPane>
            <ViewTabs>
              <ViewTab>
                <Square size={8} />
                Level 1
                <TabClose><X size={9} strokeWidth={2} /></TabClose>
              </ViewTab>
            </ViewTabs>
            <FloorPlan />
            <ViewBar>
              <Scale>1/8" = 1'-0"</Scale>
              <BarIcons>
                {BAR_ICONS.map(([Icon, c], i) => <Icon key={i} size={9} color={c} />)}
              </BarIcons>
              <ChevronLeft size={9} />
              <ScrollThumb />
              <ScrollEnd><ChevronRight size={9} /></ScrollEnd>
            </ViewBar>
          </ViewPane>
          <Workspace>
            <WorkStrip>▾</WorkStrip>
            <ScheduleWin>
              <SchedTitle>
                <Minus size={8} />
                <Square size={8} />
                <X size={9} />
              </SchedTitle>
              <SchedBody>
                <SchedRow $h={12} $bg="#efefef" $top $line="solid #777">
                  <SchedCell />
                  <SchedCell $rule $align="right">F</SchedCell>
                </SchedRow>
                <SchedRow $h={11} $line="dashed #999">
                  <SchedCell $indent={24}>Name</SchedCell>
                  <SchedCell $rule>Material A</SchedCell>
                </SchedRow>
                <SchedRow $h={10} $bg="#f0f0f0" $line="solid #ccc" />
                {SCHED_ROWS.map(([a, b], i) => (
                  <SchedRow key={i}>
                    <SchedCell $indent={26}>{a}</SchedCell>
                    <SchedCell $rule>{b}</SchedCell>
                  </SchedRow>
                ))}
              </SchedBody>
            </ScheduleWin>
          </Workspace>
          <Browser />
        </Main>
        <StatusBar>
          <StatusText>Zooms in or out using the Ctrl + mouse wheel or Ctrl + [+/-]. To reset to the original zoom level (100%), press Ctrl + 0.</StatusText>
          <StatusField />
          <StatusGrey />
        </StatusBar>
        <Taskbar>
          <TaskItem $w={31}>
            <svg width="13" height="13" viewBox="0 0 13 13" fill="#eee"><path d="M0 2l5.5-.8v5H0zM6.4 1.1L13 0v6.2H6.4zM0 7.2h5.5v5L0 11.4zM6.4 7.2H13V13l-6.6-1z" /></svg>
          </TaskItem>
          <TaskItem><Search size={13} style={{ transform: "scaleX(-1)" }} /></TaskItem>
          <TaskItem $open>
            <svg width="15" height="14" viewBox="0 0 15 14"><path d="M0 1h6l1 2h8v11H0z" fill="#e8c04c" /><rect x="3" y="9" width="9" height="5" fill="#3c9fc0" /></svg>
          </TaskItem>
          <TaskItem $active $open><AppTile $bg="#dfe7f2" $fg="#1f5f98">R</AppTile></TaskItem>
          <TaskItem $open><AppTile $bg="#3f8f2f" $fg="#e4f4da">C</AppTile></TaskItem>
          <TaskItem $open><AppTile $bg="#f4f4f4" $fg="#2c5a18">C</AppTile></TaskItem>
        </Taskbar>
        <Watermark>
          <WaterRing />
          <WaterLogo width="24" height="20" viewBox="0 0 24 20">
            <path d="M1 5l11-4 10 9-10 8z" strokeDasharray="1 1" />
            <path d="M8 11c2-3 7-3 9-1-2 2-6 3-9 1z" />
          </WaterLogo>
          <WaterCaption>Adobe Screencast</WaterCaption>
        </Watermark>
        <TypeDialog />
        <RedCursor width="9" height="14" viewBox="0 0 9 14">
          <path d="M0 0l8 8H5l2 5-2 1-2-5-3 3z" fill="#a8101c" />
        </RedCursor>
      </Root>
    </>
  );
}
